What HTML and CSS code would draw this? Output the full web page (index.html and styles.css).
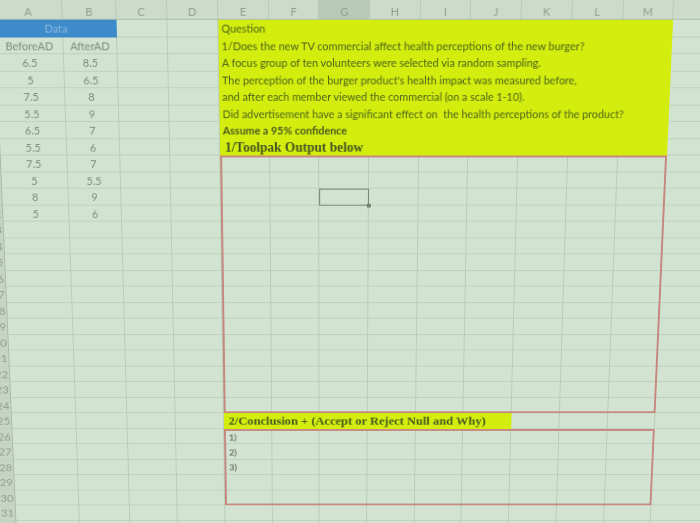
FILE: index.html
```html
<!DOCTYPE html>
<html lang="en">
<head>
  <meta charset="UTF-8" />
  <meta name="viewport" content="width=device-width, initial-scale=1.0" />
  <title>Paired t-test worksheet</title>
  <link rel="stylesheet" href="styles.css">
</head>
<body>
  <div class="sheet" id="sheet">
    <!-- merged header over the two data columns -->
    <div class="band">Data</div>

    <!-- question block, columns E to M -->
    <div class="brief">
      <p>Question</p>
      <p>1/Does the new TV commercial affect health perceptions of the new burger?</p>
      <p>A focus group of ten volunteers were selected via random sampling.</p>
      <p>The perception of the burger product's health impact was measured before,</p>
      <p>and after each member viewed the commercial (on a scale 1-10).</p>
      <p>Did advertisement have a significant effect on&nbsp; the health perceptions of the product?</p>
      <p class="strong">Assume a 95% confidence</p>
      <p class="title">1/Toolpak Output below</p>
    </div>

    <!-- empty area for the Analysis Toolpak output -->
    <div class="output"></div>

    <div class="verdict-label">2/Conclusion + (Accept or Reject Null and Why)</div>
    <div class="verdict">
      <p>1)</p>
      <p>2)</p>
      <p>3)</p>
    </div>

    <!-- active cell -->
    <div class="pick"></div>
  </div>

  <script src="script.js"></script>
</body>
</html>
```

FILE: styles.css
```css
body {
  margin: 0;
  overflow: hidden;
  background: #dfe9de;
  font-family: Lato, "Liberation Sans", sans-serif;
}
.sheet {
  display: grid;
  grid-template-columns: 38px 68px 54px 51px 51px repeat(9, 50.7px) 70px;
  grid-template-rows: 20px repeat(32, 17.5px);
  width: max-content;
  margin-left: -44px;
  background: #d2e4d1;
  transform-origin: 371px 0;
  transform: perspective(1000px) rotateX(-7.35deg);
}
.cell {
  border-right: 1px solid #b8ccb7;
  border-bottom: 1px solid #bed1bd;
  font-size: 11px;
  line-height: 17px;
  color: #7c8b7d;
  text-align: center;
  white-space: nowrap;
}
.colhead {
  background: #cddbcc;
  color: #8f9e90;
  line-height: 23px;
  border-bottom-color: #aabcaa;
}
.colhead.active {
  background: #b9c9b8;
}
.rowhead {
  background: #c7d5c6;
  color: #8f9e90;
  font-size: 12px;
  text-align: right;
  padding-right: 1px;
  border-right-color: #a9bba8;
}
.band {
  grid-column: 2 / 4;
  grid-row: 2;
  z-index: 1;
  background: #3d8bcb;
  color: #8db7de;
  font-size: 11px;
  line-height: 17px;
  text-align: center;
}
.brief {
  grid-column: 6 / 15;
  grid-row: 2 / 10;
  z-index: 1;
  display: grid;
  grid-template-rows: repeat(8, 17.5px);
  padding-left: 3px;
  background: #d3ee0e;
  color: #4e621b;
  font-size: 10.9px;
}
.brief p {
  margin: 0;
  line-height: 18px;
  white-space: nowrap;
}
.brief .strong {
  font-weight: bold;
  color: #4b5a1f;
}
.brief .title {
  font-family: "Liberation Serif", serif;
  font-weight: bold;
  font-size: 13.6px;
  color: #46551f;
  padding-left: 2px;
}
.output {
  grid-column: 6 / 15;
  grid-row: 10 / 26;
  z-index: 1;
  border: 2px solid #c7867e;
}
.verdict-label {
  grid-column: 6 / 12;
  grid-row: 26;
  z-index: 1;
  padding-left: 5px;
  background: #d3ee0e;
  color: #4a5a20;
  font-family: "Liberation Serif", serif;
  font-weight: bold;
  font-size: 13.2px;
  line-height: 17px;
  white-space: nowrap;
}
.verdict {
  grid-column: 6 / 15;
  grid-row: 27 / 32;
  z-index: 1;
  border: 2px solid #c7867e;
  padding-left: 3px;
}
.verdict p {
  margin: 0;
  height: 17px;
  line-height: 16px;
  font-size: 9.5px;
  font-weight: bold;
  color: #6b7266;
}
.pick {
  grid-column: 8;
  grid-row: 12;
  z-index: 1;
  position: relative;
  border: 1.5px solid #6c846c;
}
.pick::after {
  content: "";
  position: absolute;
  right: -3px;
  bottom: -3px;
  width: 4px;
  height: 4px;
  background: #6c846c;
}
```

FILE: script.js
```js
// Build the worksheet: column letters, row numbers and the plain cells
const sheet = document.getElementById("sheet");
const letters = ["", "A", "B", "C", "D", "E", "F", "G", "H", "I", "J", "K", "L", "M", "N"];
const rows = 32;

// Paired ratings, before and after watching the commercial
const before = ["BeforeAD", 6.5, 5, 7.5, 5.5, 6.5, 5.5, 7.5, 5, 8, 5];
const after = ["AfterAD", 8.5, 6.5, 8, 9, 7, 6, 7, 5.5, 9, 6];

for (let r = 0; r <= rows; r++) {
  for (let c = 0; c < letters.length; c++) {
    const cell = document.createElement("div");
    cell.className = "cell";
    cell.style.gridRow = r + 1;
    cell.style.gridColumn = c + 1;

    if (r === 0) {
      cell.classList.add("colhead");
      cell.textContent = letters[c];
      if (letters[c] === "G") cell.classList.add("active");
    } else if (c === 0) {
      cell.classList.add("rowhead");
      cell.textContent = r;
    } else if (r >= 2 && r - 2 < before.length) {
      // data starts on row 2, columns A and B
      if (c === 1) cell.textContent = before[r - 2];
      if (c === 2) cell.textContent = after[r - 2];
    }

    sheet.appendChild(cell);
  }
}
```
